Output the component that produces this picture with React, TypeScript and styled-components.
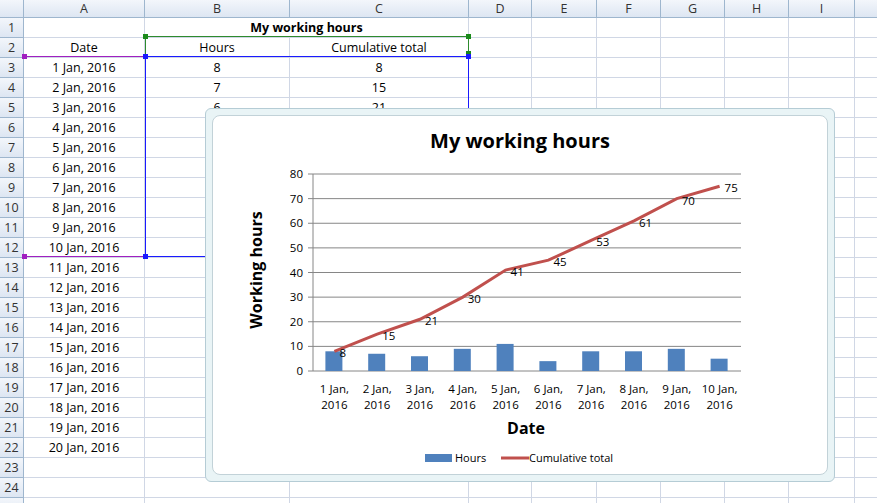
import React from "react";
import styled, { createGlobalStyle } from "styled-components";

const Global = createGlobalStyle`
  html,body{margin:0;padding:0;background:#fff;overflow:hidden;}
  body{font-family:"Open Sans","Liberation Sans",sans-serif;}
`;

const cols = [24, 121, 145, 179, 63, 65, 64, 64, 64, 66, 30];
const colNames = ["", "A", "B", "C", "D", "E", "F", "G", "H", "I", ""];

const Sheet = styled.div`
  position: relative;
  width: 877px;
  height: 503px;
  overflow: hidden;
  display: grid;
  grid-template-columns: ${cols.map((c) => c + "px").join(" ")};
  grid-template-rows: 18px;
  grid-auto-rows: 20px;
`;
const Head = styled.div`
  background: linear-gradient(#f3f6fb, #dde6f2);
  border-right: 1px solid #9eb6ce;
  border-bottom: 1px solid #9eb6ce;
  box-sizing: border-box;
  font-size: 12.5px;
  color: #333;
  display: flex;
  align-items: center;
  justify-content: center;
  overflow: hidden;
`;
const Cell = styled.div<{ $bold?: boolean; $span?: number }>`
  border-right: 1px solid #d0d7e5;
  border-bottom: 1px solid #d0d7e5;
  box-sizing: border-box;
  font-size: 12.5px;
  color: #000;
  font-weight: ${(p) => (p.$bold ? 700 : 400)};
  grid-column: span ${(p) => p.$span || 1};
  display: flex;
  align-items: center;
  justify-content: center;
  white-space: nowrap;
`;
const Sel = styled.div<{ $c: string }>`
  position: absolute;
  border: 1px solid ${(p) => p.$c};
  box-sizing: border-box;
`;
const Dot = styled.div<{ $c: string }>`
  position: absolute;
  width: 5px;
  height: 5px;
  background: ${(p) => p.$c};
`;
const ChartFrame = styled.div`
  position: absolute;
  left: 205px;
  top: 108px;
  width: 630px;
  height: 374px;
  box-sizing: border-box;
  border: 1px solid #b5ccd5;
  border-radius: 6px;
  background: #e9f4f6;
  padding: 6px;
`;
const ChartInner = styled.div`
  width: 100%;
  height: 100%;
  background: #fff;
  border: 1px solid #c2d2d8;
  border-radius: 8px;
  box-sizing: border-box;
  overflow: hidden;
`;

const hours = [8, 7, 6, 9, 11, 4, 8, 8, 9, 5];
const cum = [8, 15, 21, 30, 41, 45, 53, 61, 70, 75];

function Chart() {
  const ox = 312 - 212, oy = 370 - 115, w = 428, sc = 197 / 80;
  const cw = w / 10;
  const cx = (i: number) => ox + cw * i + cw / 2;
  const y = (v: number) => oy - v * sc;
  const f = { fontFamily: '"Open Sans","Liberation Sans",sans-serif' };
  return (
    <svg width="616" height="360" style={f}>
      <text x="307" y="32" fontSize="20" fontWeight="700" textAnchor="middle">My working hours</text>
      {[0, 10, 20, 30, 40, 50, 60, 70, 80].map((v) => (
        <g key={v}>
          <line x1={ox - 5} x2={ox + w} y1={y(v)} y2={y(v)} stroke="#868686" />
          <text x={ox - 10} y={y(v) + 4} fontSize="11.5" textAnchor="end">{v}</text>
        </g>
      ))}
      <line x1={ox} x2={ox} y1={y(80)} y2={oy} stroke="#868686" />
      {hours.map((h, i) => (
        <rect key={i} x={cx(i) - 9} y={y(h)} width="17" height={h * sc} fill="#4f81bd" />
      ))}
      <polyline points={cum.map((v, i) => `${cx(i)},${y(v)}`).join(" ")} fill="none" stroke="#c0504d" strokeWidth="3" />
      {cum.map((v, i) => (
        <text key={i} x={cx(i) + 5} y={y(v) + 6} fontSize="11.5">{v}</text>
      ))}
      {hours.map((_, i) => (
        <text key={i} x={cx(i)} y={oy + 22} fontSize="11.5" textAnchor="middle">
          <tspan x={cx(i)}>{i + 1} Jan,</tspan>
          <tspan x={cx(i)} dy="16">2016</tspan>
        </text>
      ))}
      <text x="313" y="318" fontSize="16" fontWeight="700" textAnchor="middle">Date</text>
      <text transform="translate(49 154) rotate(-90)" fontSize="16" fontWeight="700" textAnchor="middle">Working hours</text>
      <rect x="212" y="338" width="27" height="8" fill="#4f81bd" />
      <text x="242" y="346" fontSize="11">Hours</text>
      <line x1="288" y1="342" x2="316" y2="342" stroke="#c0504d" strokeWidth="3" />
      <text x="316" y="346" fontSize="11">Cumulative total</text>
    </svg>
  );
}

export default function App() {
  const rows: React.ReactNode[] = [];
  for (let r = 1; r <= 25; r++) {
    rows.push(<Head key={"h" + r}>{r}</Head>);
    if (r === 1) {
      rows.push(<Cell key="c1a" />);
      rows.push(<Cell key="c1b" $span={2} $bold>My working hours</Cell>);
    } else if (r === 2) {
      rows.push(<Cell key="a">Date</Cell>, <Cell key="b">Hours</Cell>, <Cell key="c">Cumulative total</Cell>);
    } else if (r <= 22) {
      const i = r - 3;
      rows.push(
        <Cell key={"a" + r}>{r - 2} Jan, 2016</Cell>,
        <Cell key={"b" + r}>{i < 10 ? hours[i] : ""}</Cell>,
        <Cell key={"c" + r}>{i < 10 ? cum[i] : ""}</Cell>
      );
    } else {
      rows.push(<Cell key={"a" + r} />, <Cell key={"b" + r} />, <Cell key={"c" + r} />);
    }
    for (let k = 4; k < cols.length; k++) rows.push(<Cell key={r + "-" + k} />);
  }
  return (
    <>
      <Global />
      <Sheet>
        {colNames.map((n, i) => <Head key={"col" + i}>{n}</Head>)}
        {rows}
        <Sel $c="#2e8b2e" style={{ left: 145, top: 36, width: 324, height: 21 }} />
        <Sel $c="#1a1aff" style={{ left: 145, top: 56, width: 324, height: 201 }} />
        <Sel $c="#a020c0" style={{ left: 24, top: 56, width: 122, height: 201, borderLeft: "none", borderRight: "none" }} />
        <Dot $c="#1a8a1a" style={{ left: 143, top: 34 }} />
        <Dot $c="#1a8a1a" style={{ left: 466, top: 34 }} />
        <Dot $c="#1a8a1a" style={{ left: 466, top: 51 }} />
        <Dot $c="#1a1aff" style={{ left: 143, top: 54 }} />
        <Dot $c="#1a1aff" style={{ left: 466, top: 54 }} />
        <Dot $c="#1a1aff" style={{ left: 143, top: 254 }} />
        <Dot $c="#a020c0" style={{ left: 22, top: 54 }} />
        <Dot $c="#a020c0" style={{ left: 22, top: 254 }} />
        <ChartFrame>
          <ChartInner>
            <Chart />
          </ChartInner>
        </ChartFrame>
      </Sheet>
    </>
  );
}
